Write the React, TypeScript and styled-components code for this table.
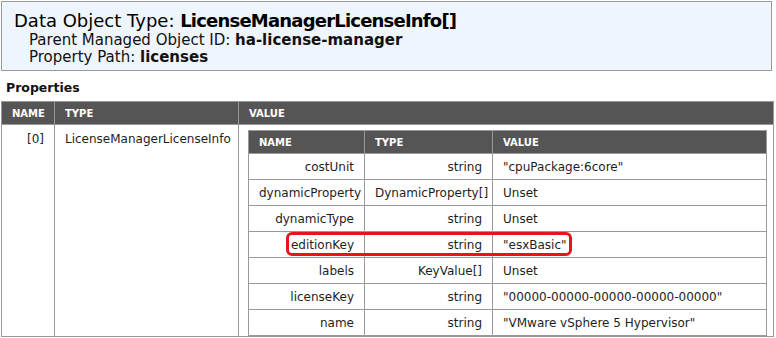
import React from 'react'
import styled, { createGlobalStyle } from 'styled-components'

const GlobalStyle = createGlobalStyle`
  body {
    margin: 0;
    background: #fff;
    font-family: "DejaVu Sans", Verdana, sans-serif;
    color: #1a1a1a;
  }
`

const Page = styled.div`
  padding: 1px 2px 0 1px;
`

const Header = styled.div`
  width: 771px;
  height: 70px;
  box-sizing: border-box;
  border: 1px solid #9a9a9a;
  background: #eef5fd;
  padding: 8px 0 0 12px;
`

const Title = styled.div`
  font-size: 18px;
  line-height: 22px;
  color: #000;
  b {
    font-weight: bold;
    letter-spacing: -0.8px;
  }
`

const SubLine = styled.div`
  font-size: 15px;
  line-height: 17px;
  padding-left: 15px;
  color: #111;
`

const SectionLabel = styled.div`
  font-size: 12.5px;
  font-weight: bold;
  color: #111;
  padding: 9px 0 0 5px;
  height: 21px;
`

const Table = styled.table`
  border-collapse: collapse;
  table-layout: fixed;
  font-size: 12px;
`

const OuterTable = styled(Table)`
  width: 773px;
`

const Th = styled.th`
  background: #555;
  color: #fff;
  font-size: 10px;
  font-weight: bold;
  text-align: left;
  padding: 0 0 0 10px;
  height: 22px;
  border: 1px solid #999;
`

const Td = styled.td<{ $align?: 'left' | 'right' }>`
  border: 1px solid #999;
  text-align: ${p => p.$align || 'left'};
  vertical-align: top;
  color: #1e1e1e;
  white-space: nowrap;
`

const OuterTd = styled(Td)`
  padding: 6px 10px 0 10px;
  line-height: 16px;
`

const ValueCell = styled(Td)`
  padding: 5px 7px 0 9px;
`

const InnerWrap = styled.div`
  position: relative;
`

const InnerTable = styled(Table)`
  width: 519px;
`

const InnerTd = styled(Td)`
  vertical-align: middle;
  height: 25px;
  padding: 0 10px;
`

const Highlight = styled.div`
  position: absolute;
  left: 38px;
  top: 102px;
  width: 286px;
  height: 24px;
  box-sizing: border-box;
  border: 3px solid #e8141b;
  border-radius: 6px;
  pointer-events: none;
`

const rows = [
  { name: 'costUnit', type: 'string', value: '"cpuPackage:6core"' },
  { name: 'dynamicProperty', type: 'DynamicProperty[]', value: 'Unset' },
  { name: 'dynamicType', type: 'string', value: 'Unset' },
  { name: 'editionKey', type: 'string', value: '"esxBasic"' },
  { name: 'labels', type: 'KeyValue[]', value: 'Unset' },
  { name: 'licenseKey', type: 'string', value: '"00000-00000-00000-00000-00000"' },
  { name: 'name', type: 'string', value: '"VMware vSphere 5 Hypervisor"' },
]

const App: React.FC = () => {
  return (
    <Page>
      <GlobalStyle />
      <Header>
        <Title>Data Object Type: <b>LicenseManagerLicenseInfo[]</b></Title>
        <SubLine>Parent Managed Object ID: <b>ha-license-manager</b></SubLine>
        <SubLine>Property Path: <b>licenses</b></SubLine>
      </Header>
      <SectionLabel>Properties</SectionLabel>
      <OuterTable>
        <colgroup>
          <col style={{ width: 53 }} />
          <col style={{ width: 184 }} />
          <col />
        </colgroup>
        <thead>
          <tr>
            <Th>NAME</Th>
            <Th>TYPE</Th>
            <Th>VALUE</Th>
          </tr>
        </thead>
        <tbody>
          <tr>
            <OuterTd $align="right">[0]</OuterTd>
            <OuterTd>LicenseManagerLicenseInfo</OuterTd>
            <ValueCell>
              <InnerWrap>
                <InnerTable>
                  <colgroup>
                    <col style={{ width: 116 }} />
                    <col style={{ width: 128 }} />
                    <col />
                  </colgroup>
                  <thead>
                    <tr>
                      <Th>NAME</Th>
                      <Th>TYPE</Th>
                      <Th>VALUE</Th>
                    </tr>
                  </thead>
                  <tbody>
                    {rows.map(r => (
                      <tr key={r.name}>
                        <InnerTd $align="right">{r.name}</InnerTd>
                        <InnerTd $align="right">{r.type}</InnerTd>
                        <InnerTd>{r.value}</InnerTd>
                      </tr>
                    ))}
                  </tbody>
                </InnerTable>
                <Highlight />
              </InnerWrap>
            </ValueCell>
          </tr>
        </tbody>
      </OuterTable>
    </Page>
  )
}

export default App
